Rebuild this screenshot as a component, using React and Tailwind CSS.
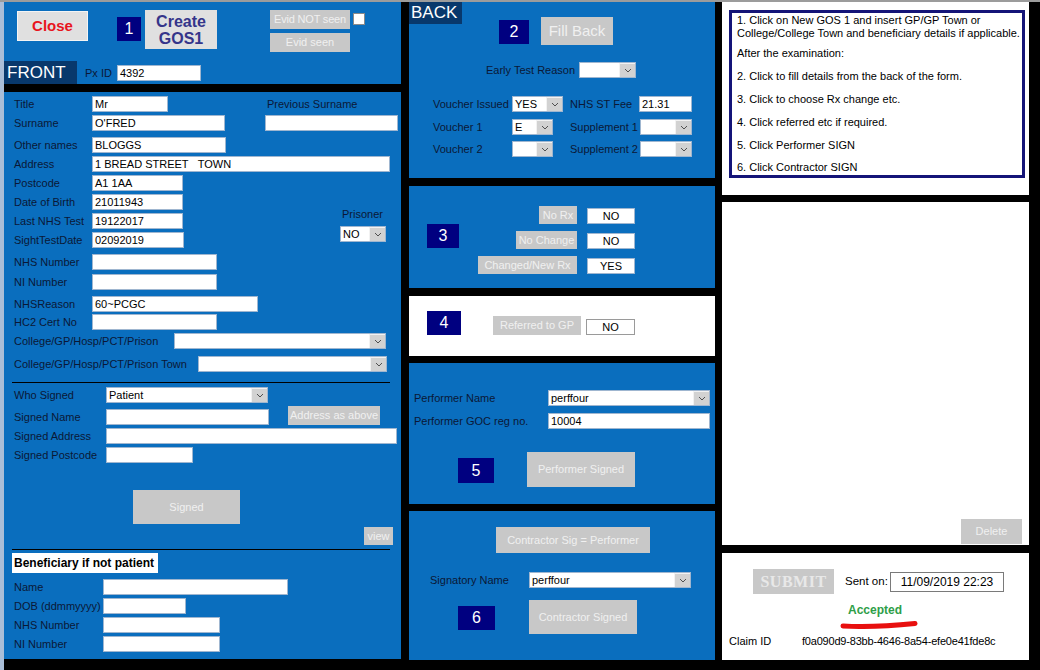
import React from 'react';

const PANEL = 'bg-[#0a6ebe]';

function Field({ className = '', children }) {
  return (
    <div className={`h-[16px] shrink-0 bg-white border border-[#9fb6d0] text-[11px] leading-[14px] px-[2px] text-black whitespace-nowrap overflow-hidden ${className}`}>
      {children}
    </div>
  );
}

function Select({ className = '', value }) {
  return (
    <div className={`h-[16px] shrink-0 bg-white border border-[#9fb6d0] flex ${className}`}>
      <div className="flex-1 text-[11px] leading-[14px] px-[2px] text-black whitespace-nowrap overflow-hidden">{value}</div>
      <div className="w-[16px] h-full bg-[#d2d2d2] border-l border-t border-[#f2f2f2] flex items-center justify-center">
        <svg width="8" height="5" viewBox="0 0 8 5">
          <polyline points="1,1 4,4 7,1" fill="none" stroke="#505050" strokeWidth="1" />
        </svg>
      </div>
    </div>
  );
}

function Label({ className = '', children }) {
  return <span className={`text-[11px] leading-[16px] text-[#0a1836] whitespace-nowrap shrink-0 ${className}`}>{children}</span>;
}

function Dis({ className = '', children }) {
  return (
    <div className={`shrink-0 bg-[#c8c8c8] text-[#f0f0f0] text-[11px] flex items-center justify-center whitespace-nowrap ${className}`}>
      {children}
    </div>
  );
}

function Num({ className = '', children }) {
  return (
    <div className={`shrink-0 bg-[#000080] text-white text-[16px] flex items-center justify-center ${className}`}>
      {children}
    </div>
  );
}

function Row({ className = '', children }) {
  return <div className={`flex items-center h-[16px] ${className}`}>{children}</div>;
}

function LeftTop() {
  return (
    <div className={`${PANEL} h-[82px] flex flex-col`}>
      <div className="h-[59px] flex items-start pt-[8px] pl-[13px]">
        <div className="mt-[1px] w-[71px] h-[30px] bg-[#e0e0e0] border border-[#f4f4f4] text-[#e8141c] font-bold text-[15px] flex items-center justify-center">
          Close
        </div>
        <Num className="ml-[29px] mt-[7px] w-[24px] h-[24px]">1</Num>
        <div className="ml-[4px] w-[72px] h-[39px] bg-[#e0e0e0] text-[#35358a] font-bold text-[16px] leading-[17px] flex items-center justify-center text-center">
          Create
          <br />
          GOS1
        </div>
        <div className="ml-[53px] flex flex-col gap-[4px]">
          <Dis className="w-[80px] h-[19px] text-[10.5px] tracking-[-0.2px]">Evid NOT seen</Dis>
          <Dis className="w-[80px] h-[19px]">Evid seen</Dis>
        </div>
        <div className="ml-[3px] mt-[3px] w-[12px] h-[12px] bg-white border border-[#8a8a8a]" />
      </div>
      <div className="h-[23px] flex items-center">
        <div className="w-[73px] h-full bg-[#08386c] text-white text-[17px] leading-[23px] pl-[3px]">FRONT</div>
        <Label className="ml-[8px] w-[32px]">Px ID</Label>
        <Field className="w-[84px]">4392</Field>
      </div>
    </div>
  );
}

function FrontForm() {
  return (
    <div className={`${PANEL} h-[567px] flex flex-col pl-[10px] pt-[4px]`}>
      <Row>
        <Label className="w-[78px]">Title</Label>
        <Field className="w-[76px]">Mr</Field>
        <Label className="ml-[99px]">Previous Surname</Label>
      </Row>
      <Row className="mt-[3px]">
        <Label className="w-[78px]">Surname</Label>
        <Field className="w-[133px]">O'FRED</Field>
        <Field className="ml-[40px] w-[133px]" />
      </Row>
      <Row className="mt-[6px]">
        <Label className="w-[78px]">Other names</Label>
        <Field className="w-[134px]">BLOGGS</Field>
      </Row>
      <Row className="mt-[3px]">
        <Label className="w-[78px]">Address</Label>
        <Field className="w-[298px]">1 BREAD STREET&nbsp;&nbsp;&nbsp;TOWN</Field>
      </Row>
      <div className="mt-[3px] flex items-start">
        <div className="flex flex-col gap-[3px]">
          <Row>
            <Label className="w-[78px]">Postcode</Label>
            <Field className="w-[91px]">A1 1AA</Field>
          </Row>
          <Row>
            <Label className="w-[78px]">Date of Birth</Label>
            <Field className="w-[91px]">21011943</Field>
          </Row>
          <Row>
            <Label className="w-[78px]">Last NHS Test</Label>
            <Field className="w-[91px]">19122017</Field>
          </Row>
          <Row>
            <Label className="w-[78px]">SightTestDate</Label>
            <Field className="w-[92px]">02092019</Field>
          </Row>
        </div>
        <div className="ml-[156px] mt-[31px] flex flex-col">
          <Label className="pl-[2px] leading-[14px]">Prisoner</Label>
          <Select className="mt-[4px] w-[46px]" value="NO" />
        </div>
      </div>
      <Row className="mt-[6px]">
        <Label className="w-[78px]">NHS Number</Label>
        <Field className="w-[125px]" />
      </Row>
      <Row className="mt-[4px]">
        <Label className="w-[78px]">NI Number</Label>
        <Field className="w-[125px]" />
      </Row>
      <Row className="mt-[6px]">
        <Label className="w-[78px]">NHSReason</Label>
        <Field className="w-[166px]">60~PCGC</Field>
      </Row>
      <Row className="mt-[2px]">
        <Label className="w-[78px]">HC2 Cert No</Label>
        <Field className="w-[125px]" />
      </Row>
      <Row className="mt-[3px]">
        <Label className="w-[160px]">College/GP/Hosp/PCT/Prison</Label>
        <Select className="w-[212px]" value="" />
      </Row>
      <Row className="mt-[7px]">
        <Label className="w-[184px]">College/GP/Hosp/PCT/Prison Town</Label>
        <Select className="w-[189px]" value="" />
      </Row>
      <div className="mt-[10px] -ml-[2px] w-[378px] h-[1px] bg-black" />
      <Row className="mt-[4px]">
        <Label className="w-[92px]">Who Signed</Label>
        <Select className="w-[162px]" value="Patient" />
      </Row>
      <div className="mt-[3px] flex items-end">
        <Label className="w-[92px]">Signed Name</Label>
        <Field className="w-[163px]" />
        <Dis className="ml-[19px] w-[92px] h-[19px]">Address as above</Dis>
      </div>
      <Row className="mt-[3px]">
        <Label className="w-[92px]">Signed Address</Label>
        <Field className="w-[291px]" />
      </Row>
      <Row className="mt-[3px]">
        <Label className="w-[92px]">Signed Postcode</Label>
        <Field className="w-[87px]" />
      </Row>
      <Dis className="mt-[27px] ml-[119px] w-[107px] h-[34px]">Signed</Dis>
      <Dis className="mt-[3px] ml-[350px] w-[29px] h-[18px]">view</Dis>
      <div className="mt-[4px] -ml-[2px] w-[378px] h-[1px] bg-black" />
      <div className="mt-[3px] -ml-[2px] w-[146px] h-[20px] bg-white text-black font-bold text-[12px] leading-[20px] pl-[2px] whitespace-nowrap">
        Beneficiary if not patient
      </div>
      <Row className="mt-[6px]">
        <Label className="w-[89px]">Name</Label>
        <Field className="w-[185px]" />
      </Row>
      <Row className="mt-[3px]">
        <Label className="w-[89px]">DOB (ddmmyyyy)</Label>
        <Field className="w-[83px]" />
      </Row>
      <Row className="mt-[3px]">
        <Label className="w-[89px]">NHS Number</Label>
        <Field className="w-[117px]" />
      </Row>
      <Row className="mt-[3px]">
        <Label className="w-[89px]">NI Number</Label>
        <Field className="w-[117px]" />
      </Row>
    </div>
  );
}

function BackPanel() {
  return (
    <div className={`${PANEL} h-[176px] flex flex-col`}>
      <div className="h-[45px] flex items-start">
        <div className="w-[53px] h-[22px] bg-[#08386c] text-white text-[17px] leading-[22px] pl-[2px]">BACK</div>
        <Num className="ml-[37px] mt-[18px] w-[30px] h-[24px]">2</Num>
        <Dis className="ml-[12px] mt-[15px] w-[72px] h-[28px] text-[15px]">Fill Back</Dis>
      </div>
      <Row className="mt-[15px] pl-[77px]">
        <Label className="w-[93px]">Early Test Reason</Label>
        <Select className="w-[57px]" value="" />
      </Row>
      <Row className="mt-[18px] pl-[24px]">
        <Label className="w-[79px]">Voucher Issued</Label>
        <div className="w-[58px]">
          <Select className="w-[51px]" value="YES" />
        </div>
        <Label className="w-[69px]">NHS ST Fee</Label>
        <Field className="w-[53px]">21.31</Field>
      </Row>
      <Row className="mt-[7px] pl-[24px]">
        <Label className="w-[79px]">Voucher 1</Label>
        <div className="w-[58px]">
          <Select className="w-[41px]" value="E" />
        </div>
        <Label className="w-[70px]">Supplement 1</Label>
        <Select className="w-[52px]" value="" />
      </Row>
      <Row className="mt-[6px] pl-[24px]">
        <Label className="w-[79px]">Voucher 2</Label>
        <div className="w-[58px]">
          <Select className="w-[41px]" value="" />
        </div>
        <Label className="w-[70px]">Supplement 2</Label>
        <Select className="w-[52px]" value="" />
      </Row>
    </div>
  );
}

function RxPanel() {
  const rows = [
    ['No Rx', 'w-[38px]', 'NO'],
    ['No Change', 'w-[61px]', 'NO'],
    ['Changed/New Rx', 'w-[99px]', 'YES'],
  ];
  return (
    <div className={`${PANEL} h-[102px] flex items-start`}>
      <Num className="ml-[18px] mt-[38px] w-[32px] h-[24px]">3</Num>
      <div className="pt-[20px] flex flex-col gap-[7px]">
        {rows.map(([label, w, val]) => (
          <div key={label} className="flex items-end">
            <div className="w-[118px] flex justify-end">
              <Dis className={`${w} h-[18px]`}>{label}</Dis>
            </div>
            <div className="ml-[10px] w-[48px] h-[16px] bg-white border border-[#9fb6d0] text-black text-[11px] leading-[14px] text-center">
              {val}
            </div>
          </div>
        ))}
      </div>
    </div>
  );
}

function ReferredPanel() {
  return (
    <div className="bg-white h-[60px] flex items-start">
      <Num className="ml-[18px] mt-[15px] w-[34px] h-[24px]">4</Num>
      <Dis className="ml-[32px] mt-[20px] w-[88px] h-[19px]">Referred to GP</Dis>
      <div className="ml-[5px] mt-[23px] w-[49px] h-[16px] bg-white border border-[#9a9a9a] text-black text-[11px] leading-[14px] text-center">
        NO
      </div>
    </div>
  );
}

function PerformerPanel() {
  return (
    <div className={`${PANEL} h-[141px] flex flex-col pt-[27px]`}>
      <Row className="pl-[5px]">
        <Label className="w-[134px]">Performer Name</Label>
        <Select className="w-[162px]" value="perffour" />
      </Row>
      <Row className="mt-[7px] pl-[5px]">
        <Label className="w-[134px]">Performer GOC reg no.</Label>
        <Field className="w-[162px]">10004</Field>
      </Row>
      <div className="mt-[23px] flex items-start">
        <Num className="ml-[49px] mt-[6px] w-[36px] h-[25px] text-[#b4bedc]">5</Num>
        <Dis className="ml-[33px] w-[108px] h-[35px]">Performer Signed</Dis>
      </div>
    </div>
  );
}

function ContractorPanel() {
  return (
    <div className={`${PANEL} h-[149px] flex flex-col pt-[16px]`}>
      <Dis className="ml-[87px] w-[154px] h-[26px]">Contractor Sig = Performer</Dis>
      <Row className="mt-[19px] pl-[21px]">
        <Label className="w-[99px]">Signatory Name</Label>
        <Select className="w-[162px]" value="perffour" />
      </Row>
      <div className="mt-[12px] flex items-start">
        <Num className="ml-[49px] mt-[6px] w-[37px] h-[24px]">6</Num>
        <Dis className="ml-[34px] w-[108px] h-[34px]">Contractor Signed</Dis>
      </div>
    </div>
  );
}

function Instructions() {
  return (
    <div className="bg-white h-[193px] pt-[8px] pl-[7px]">
      <div className="w-[296px] h-[168px] border-[3px] border-[#141478] pl-[5px] pt-[1px] text-[11px] leading-[13px] text-black whitespace-nowrap">
        <p>
          1. Click on New GOS 1 and insert GP/GP Town or
          <br />
          College/College Town and beneficiary details if applicable.
        </p>
        <p className="mt-[7px]">After the examination:</p>
        <p className="mt-[10px]">2. Click to fill details from the back of the form.</p>
        <p className="mt-[10px]">3. Click to choose Rx change etc.</p>
        <p className="mt-[10px]">4. Click referred etc if required.</p>
        <p className="mt-[10px]">5. Click Performer SIGN</p>
        <p className="mt-[9px]">6. Click Contractor SIGN</p>
      </div>
    </div>
  );
}

function SubmitPanel() {
  return (
    <div className="bg-white h-[107px] flex flex-col pt-[16px]">
      <div className="flex items-center h-[25px]">
        <div className="ml-[31px] w-[81px] h-[25px] bg-[#c8c8c8] text-[#e8e8e8] font-bold text-[16px] tracking-[0.5px] font-['Liberation_Serif',serif] flex items-center justify-center">
          SUBMIT
        </div>
        <span className="ml-[11px] w-[45px] text-[11.5px] text-black">Sent on:</span>
        <div className="w-[114px] h-[20px] border border-[#7a7a7a] text-[12px] leading-[18px] text-black text-center">
          11/09/2019 22:23
        </div>
      </div>
      <div className="mt-[9px] ml-[126px] text-[12px] leading-[14px] font-bold text-[#2e9e48]">Accepted</div>
      <svg className="mt-[3px] ml-[118px]" width="78" height="9" viewBox="0 0 78 9">
        <path d="M3 6 C 20 7, 45 6.5, 75 3.5" fill="none" stroke="#e8100f" strokeWidth="5" strokeLinecap="round" />
      </svg>
      <div className="mt-[5px] flex text-[11px] leading-[14px] text-black">
        <span className="ml-[7px] w-[73px]">Claim ID</span>
        <span className="tracking-[-0.2px]">f0a090d9-83bb-4646-8a54-efe0e41fde8c</span>
      </div>
    </div>
  );
}

export default function App() {
  return (
    <div className="w-[1040px] h-[670px] bg-black border-t-2 border-[#9c9c9c] flex overflow-hidden font-['Liberation_Sans',Arial,sans-serif]">
      <div className="w-[4px] h-full bg-[#aabed8]" />
      <div className="w-[397px] flex flex-col gap-[8px]">
        <LeftTop />
        <FrontForm />
      </div>
      <div className="ml-[8px] w-[306px] flex flex-col">
        <BackPanel />
        <div className="mt-[8px]">
          <RxPanel />
        </div>
        <div className="mt-[8px]">
          <ReferredPanel />
        </div>
        <div className="mt-[7px]">
          <PerformerPanel />
        </div>
        <div className="mt-[7px]">
          <ContractorPanel />
        </div>
      </div>
      <div className="ml-[7px] w-[307px] flex flex-col">
        <Instructions />
        <div className="mt-[7px] bg-white h-[343px] flex items-end justify-end pr-[7px] pb-[1px]">
          <Dis className="w-[61px] h-[25px]">Delete</Dis>
        </div>
        <div className="mt-[8px]">
          <SubmitPanel />
        </div>
      </div>
    </div>
  );
}
